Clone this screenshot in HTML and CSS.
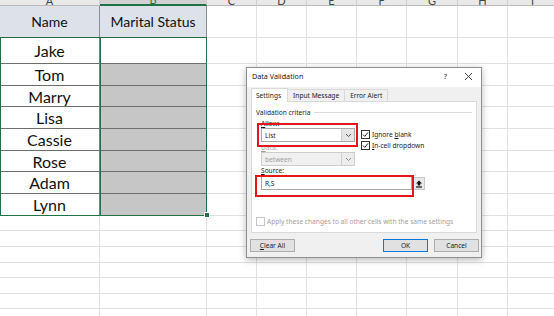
FILE: index.html
```html
<!DOCTYPE html>
<html lang="en">
<head>
    <meta charset="UTF-8">
    <title>Data Validation</title>
    <link rel="stylesheet" href="styles.css">
</head>
<body>
    <div class="sheet" id="sheet"></div>
    <div class="selection"><span class="handle"></span></div>

    <div class="dialog">
        <div class="dlg-title">
            <span>Data Validation</span>
            <span class="dlg-ctrl">
                <span class="help">?</span>
                <svg class="close" width="9" height="9" viewBox="0 0 9 9"><path d="M1 1L8 8M8 1L1 8" stroke="#333" stroke-width="0.9" fill="none"/></svg>
            </span>
        </div>
        <div class="tabs">
            <span class="tab active">Settings</span>
            <span class="tab">Input Message</span>
            <span class="tab">Error Alert</span>
        </div>
        <div class="panel">
            <div class="group-title"><span>Validation criteria</span></div>
            <div class="criteria">
                <div class="fields">
                    <div class="label lbl-allow"><u>A</u>llow:</div>
                    <div class="select">List<span class="caret"><svg width="7" height="5" viewBox="0 0 7 5"><path d="M1 1L3.5 3.5L6 1" stroke="#555" fill="none"/></svg></span></div>
                    <div class="label dim lbl-data"><u>D</u>ata:</div>
                    <div class="select disabled">between<span class="caret"><svg width="7" height="5" viewBox="0 0 7 5"><path d="M1 1L3.5 3.5L6 1" stroke="#888" fill="none"/></svg></span></div>
                </div>
                <div class="checks">
                    <div class="check"><span class="box"><svg width="7" height="7" viewBox="0 0 7 7"><path d="M1 3.6L2.8 5.4L6 1.4" stroke="#222" fill="none"/></svg></span><span>Ignore <u>b</u>lank</span></div>
                    <div class="check"><span class="box"><svg width="7" height="7" viewBox="0 0 7 7"><path d="M1 3.6L2.8 5.4L6 1.4" stroke="#222" fill="none"/></svg></span><span><u>I</u>n-cell dropdown</span></div>
                </div>
            </div>
            <div class="label lbl-source"><u>S</u>ource:</div>
            <div class="source-row">
                <div class="input">R,S</div>
                <span class="ref-btn"><svg width="8" height="8" viewBox="0 0 8 8"><path d="M4 0.5L7 3.5H5.2V5.5H2.8V3.5H1Z" fill="#111"/><path d="M1 7H7" stroke="#111" stroke-width="1.2"/></svg></span>
            </div>
            <div class="check apply"><span class="box off"></span><span>Apply these changes to all other cells with the same settings</span></div>
        </div>
        <div class="buttons">
            <span class="btn"><span><u>C</u>lear All</span></span>
            <span class="spacer"></span>
            <span class="btn primary">OK</span>
            <span class="btn">Cancel</span>
        </div>
        <div class="mark mark-allow"></div>
        <div class="mark mark-source"></div>
    </div>

    <script>
        const names = ['Jake', 'Tom', 'Marry', 'Lisa', 'Cassie', 'Rose', 'Adam', 'Lynn'];
        const letters = ['A', 'B', 'C', 'D', 'E', 'F', 'G', 'H', 'I'];
        const sheet = document.getElementById('sheet');

        function addRow(kind, cells) {
            const row = document.createElement('div');
            row.className = 'row ' + kind;
            cells.forEach(c => {
                const cell = document.createElement('div');
                cell.className = 'cell ' + (c.cls || '');
                if (c.text) cell.innerHTML = '<span>' + c.text + '</span>';
                row.appendChild(cell);
            });
            sheet.appendChild(row);
        }

        // column letters
        addRow('r-head', letters.map((l, i) => ({ text: l, cls: 'colhead' + (i === 1 ? ' picked' : '') })));

        // title row
        addRow('r-title', letters.map((l, i) => {
            if (i === 0) return { text: 'Name', cls: 'tbl th' };
            if (i === 1) return { text: 'Marital Status', cls: 'tbl th' };
            return {};
        }));

        names.forEach((n, idx) => {
            addRow(idx === 0 ? 'r-first' : 'r-name', letters.map((l, i) => {
                if (i === 0) return { text: n, cls: 'tbl name' };
                if (i === 1) return { cls: 'tbl status' + (idx > 0 ? ' grey' : '') };
                return {};
            }));
        });

        for (let r = 0; r < 7; r++) {
            addRow('r-low', letters.map(() => ({})));
        }
    </script>
</body>
</html>
```

FILE: styles.css
```css
body {
    margin: 0;
    width: 554px;
    height: 316px;
    overflow: hidden;
    position: relative;
    background: #fff;
    font-family: 'Noto Sans', sans-serif;
}

/* spreadsheet */
.sheet {
    display: flex;
    flex-direction: column;
    font-family: Lato, 'Liberation Sans', sans-serif;
}
.row {
    display: grid;
    grid-template-columns: 100px 107px 50px 50px 50px 50px 51px 50px 50px;
    flex: none;
}
.r-head { height: 6px; }
.r-title { height: 32px; }
.r-first { height: 26px; }
.r-name { height: 21.7px; }
.r-low { height: 15.6px; }
.cell {
    box-sizing: border-box;
    border-right: 1px solid #e1e1e1;
    border-bottom: 1px solid #e1e1e1;
    display: flex;
    align-items: center;
    justify-content: center;
    overflow: hidden;
    color: #111;
}
.colhead {
    background: #e9e9e9;
    border-right-color: #cfcfcf;
    border-bottom-color: #b9b9b9;
    align-items: flex-end;
    font-size: 11px;
    color: #444;
}
.colhead span { line-height: 11px; margin-bottom: -1px; }
.colhead.picked {
    background: #d2d2d2;
    border-bottom: 2px solid #217346;
    color: #217346;
}
.tbl {
    border-right-color: #7d7d7d;
    border-bottom-color: #6e6e6e;
    font-size: 15px;
}
.th {
    background: #dce1ea;
    border-right-color: #8e8e8e;
    font-size: 14px;
}
.name { font-size: 16px; }
.grey { background: #c6c6c6; }
.status { border-right-color: #217346; }

.selection {
    position: absolute;
    left: 0;
    top: 37px;
    width: 207px;
    height: 179px;
    box-sizing: border-box;
    border: 1px solid #217346;
    border-right: none;
    pointer-events: none;
}
.selection::after {
    content: '';
    position: absolute;
    left: 99px;
    top: 0;
    bottom: 0;
    border-left: 1px solid #217346;
}
.handle {
    position: absolute;
    right: -3px;
    bottom: -3px;
    width: 4px;
    height: 4px;
    background: #217346;
    border: 1px solid #fff;
}

/* dialog */
.dialog {
    position: absolute;
    left: 246px;
    top: 67px;
    width: 236px;
    height: 191px;
    box-sizing: border-box;
    background: #f0f0f0;
    border: 1px solid #8f8f8f;
    box-shadow: 0 2px 7px rgba(0, 0, 0, 0.28);
    font-size: 6.6px;
    color: #1a1a1a;
}
.dlg-title {
    height: 19px;
    box-sizing: border-box;
    background: #fff;
    display: flex;
    align-items: center;
    justify-content: space-between;
    padding: 0 8px 3px 5px;
    font-size: 7.2px;
}
.dlg-ctrl {
    display: flex;
    align-items: center;
    gap: 17px;
}
.help { font-size: 7.5px; color: #333; }
.tabs {
    display: flex;
    align-items: flex-end;
    height: 14px;
    padding-left: 4px;
}
.tab {
    height: 12px;
    box-sizing: border-box;
    padding: 0 5px;
    border: 1px solid #d9d9d9;
    border-bottom: none;
    display: flex;
    align-items: center;
    margin-right: -1px;
}
.tab.active {
    height: 14px;
    background: #fff;
    position: relative;
    top: 1px;
    z-index: 1;
    padding: 0 6px 0 4px;
}
.panel {
    margin: 0 4px;
    height: 132px;
    box-sizing: border-box;
    background: #fff;
    border: 1px solid #d9d9d9;
    padding: 5px 0 0 4px;
}
.group-title {
    height: 10px;
    display: flex;
    align-items: center;
    gap: 4px;
    padding-right: 4px;
}
.group-title::after {
    content: '';
    flex: 1;
    border-top: 1px solid #dcdcdc;
}
.criteria {
    display: flex;
    gap: 6px;
    padding-left: 5px;
}
.fields {
    width: 94px;
    display: flex;
    flex-direction: column;
}
.label {
    height: 8px;
    line-height: 8px;
}
.lbl-allow { margin-top: 3px; }
.lbl-data { margin-top: 2px; }
.lbl-source { margin: 1px 0 0 5px; }
.dim { color: #a3a3a3; }
.select {
    height: 14px;
    box-sizing: border-box;
    border: 1px solid #a9a9a9;
    background: #fff;
    display: flex;
    align-items: center;
    padding-left: 3px;
    position: relative;
}
.select:first-of-type { margin-top: 1px; }
.caret {
    position: absolute;
    right: 0;
    top: 0;
    bottom: 0;
    width: 12px;
    background: #e6e6e6;
    border-left: 1px solid #d0d0d0;
    display: flex;
    align-items: center;
    justify-content: center;
}
.select.disabled {
    margin-top: 0;
    background: #f0f0f0;
    border-color: #cdcdcd;
    color: #a0a0a0;
}
.select.disabled .caret { background: #ececec; }
.checks {
    padding-top: 13px;
    display: flex;
    flex-direction: column;
    gap: 2px;
}
.check {
    display: flex;
    align-items: center;
    gap: 2px;
    height: 9px;
}
.box {
    width: 9px;
    height: 9px;
    box-sizing: border-box;
    border: 1px solid #333;
    background: #fff;
    display: flex;
    align-items: center;
    justify-content: center;
}
.box.off { border-color: #c4c4c4; }
.source-row {
    display: flex;
    gap: 1px;
    margin: 1px 0 0 5px;
}
.input {
    width: 151px;
    height: 14px;
    box-sizing: border-box;
    border: 1px solid #a9a9a9;
    display: flex;
    align-items: center;
    padding-left: 3px;
}
.ref-btn {
    width: 12px;
    height: 13px;
    box-sizing: border-box;
    border: 1px solid #c8c8c8;
    background: #e8e8e8;
    display: flex;
    align-items: center;
    justify-content: center;
    margin-top: 1px;
}
.apply {
    margin-top: 27px;
    color: #a0a0a0;
    gap: 2px;
}
.buttons {
    display: flex;
    gap: 6px;
    padding: 6px 2px 0 3px;
}
.spacer { flex: 1; }
.btn {
    width: 45px;
    height: 13px;
    box-sizing: border-box;
    border: 1px solid #adadad;
    background: #e1e1e1;
    display: flex;
    align-items: center;
    justify-content: center;
}
.btn.primary { border: 1px solid #0078d7; }

/* red annotation boxes */
.mark {
    position: absolute;
    border: 2px solid #e3161c;
    box-sizing: border-box;
}
.mark-allow {
    left: 10px;
    top: 55px;
    width: 101px;
    height: 24px;
}
.mark-source {
    left: 8px;
    top: 107px;
    width: 159px;
    height: 22px;
}
```
